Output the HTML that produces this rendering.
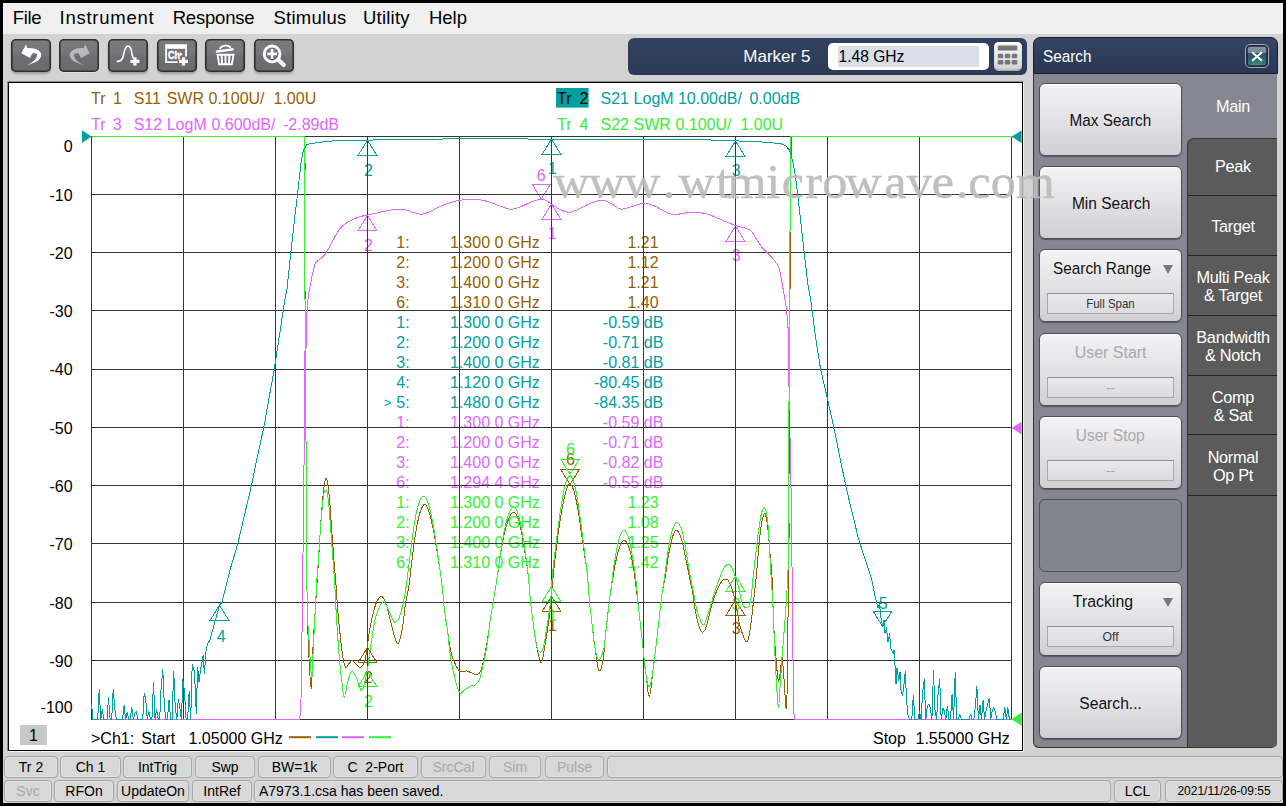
<!DOCTYPE html><html><head><meta charset="utf-8"><title>Network Analyzer</title><style>
*{box-sizing:border-box;margin:0;padding:0}
html,body{width:1286px;height:806px;overflow:hidden;background:#000}
body{position:relative;font-family:"Liberation Sans","DejaVu Sans",sans-serif;color:#000}
.abs{position:absolute}
#win{position:absolute;left:3px;top:3px;width:1280px;height:800px;background:#d3d3d3;overflow:hidden}
#menubar{position:absolute;left:0;top:0;width:1280px;height:31px;background:#f0f0f0}
#menubar span{position:absolute;top:4.3px;font-size:18.5px;line-height:22px;white-space:nowrap}
.tb{position:absolute;top:36.4px;width:40px;height:32.6px;border-radius:5px;border:0;outline:0;
 background:linear-gradient(#7b7b7f 0%,#76767a 45%,#6e6e72 55%,#6a6a6e 100%);box-shadow:0 2px 2px rgba(0,0,0,.25), inset 0 0 0 1.6px #2f2f31, inset 0 3px 1px -1px rgba(255,255,255,.13)}
.tb svg{position:absolute;left:0;top:0}
.tb.dis{box-shadow:0 1px 0 rgba(255,255,255,.35), inset 0 0 0 1.6px #2f2f31, inset -2px -2px 1px -1px rgba(255,255,255,.22)}
#mk{position:absolute;left:625px;top:35px;width:399px;height:37px;border-radius:6px;background:linear-gradient(#32415f,#2d3a58)}
#mk .lab{position:absolute;left:115.3px;top:8px;color:#fff;font-size:17px;line-height:22px;white-space:nowrap}
#mk .inp{position:absolute;left:200.4px;top:5px;width:161px;height:27px;border-radius:5px;background:#fff}
#mk .sel{position:absolute;left:9.6px;top:3px;width:141px;height:20.5px;background:#d9dee9;font-size:15.6px;line-height:21px;white-space:nowrap;padding-left:0.5px}
#mk .calc{position:absolute;left:365.6px;top:4.2px;width:28.4px;height:28.8px;border-radius:5px;background:linear-gradient(#f7f7f7 0%,#e6e6e8 50%,#cfcfd2 100%);box-shadow:inset 0 1.5px 1px #fff, inset 0 -1.5px 1px #a9a9ad, 0 0 1px #1c263c}
#panel{position:absolute;left:1030.4px;top:35px;width:244px;height:710px}
#ptitle{position:absolute;left:0;top:-1px;width:244.6px;height:37.2px;border-radius:7px 7px 0 0;background:linear-gradient(#364561 0%,#2f3d5b 55%,#2b3753 100%);border:1.6px solid #1b1d26;border-bottom-width:1px}
#ptitle .t{position:absolute;left:8.2px;top:7.8px;color:#fff;font-size:16.7px;line-height:22px}
.fx{display:inline-block;transform-origin:50% 50%;white-space:nowrap}
#ptitle .fx{transform-origin:0 50%}
#pclose{position:absolute;left:210.2px;top:5.6px;width:24px;height:24px;border-radius:5px;border:1px solid #a4abba;background:radial-gradient(ellipse 70% 45% at 50% 100%,#469884 0%,rgba(70,152,132,0) 100%),linear-gradient(#8794a4 0%,#7d8a9b 35%,#2c5964 37%,#2f6468 100%);box-shadow:inset 0 0 0 1.7px #1a2740}
#pclose svg{position:absolute;left:0;top:0}
#pbody{position:absolute;left:0;top:36px;width:244px;height:674px;background:#868692;border:1.5px solid #36361e;border-top:none;border-radius:0 0 6px 6px}
#tabs{position:absolute;left:152.6px;top:0px;width:90.4px;height:673px;background:#868692;border-radius:0 0 4px 0}
.tab{position:absolute;left:0;width:90.4px;border-top:1.5px solid #222220;border-left:1.4px solid #35351c;background:#5b5b5b}
.tab.first{border-radius:7px 0 0 0;border-top-color:#3a3a24;border-left-color:#3a3a24}
.tab.act{background:#868692;border:none;border-radius:0}
.tabt{position:absolute;left:1px;width:90px;height:58px;color:#fff;font-size:16.3px;line-height:18px;text-align:center;letter-spacing:-0.3px;display:flex;align-items:center;justify-content:center}
.pb{position:absolute;left:4.6px;width:143.4px;height:73.2px;border-radius:6px;border:1px solid #4e4e56;
 background:linear-gradient(#f3f3f5 0%,#e6e6e9 40%,#d9d9dd 75%,#cfcfd4 100%);box-shadow:inset 0 1px 0 #fff, 0 1px 1px rgba(0,0,0,.35);
 font-size:16.3px;text-align:center;color:#111}
.pb .c{position:absolute;left:0;width:100%;top:25px;line-height:22px}
.pb .u{position:absolute;left:0;width:125px;top:7px;line-height:22px}
.pb .v{position:absolute;left:7px;top:43px;width:127px;height:21px;border:1px solid #a8a8b0;border-top-color:#8e8e96;background:linear-gradient(#e9e9ec,#dcdce0);font-size:13px;line-height:19px;color:#333}
.pb .ar{position:absolute;left:123px;top:15px;width:0;height:0;border-left:5px solid transparent;border-right:5px solid transparent;border-top:9px solid #77777f}
.pb.dis{color:#a9a9ae}
.pb.dis .v{color:#a0a0a6}
.pb.empty{background:#84848f;box-shadow:none;border-color:#50505a}
.sb{position:absolute;height:22px;border:1px solid #a4a4a4;border-radius:4px;background:#d8d8d8;font-size:14px;line-height:20px;text-align:center;white-space:nowrap;color:#000;box-shadow:inset 0 0 0 1px #e2e2e2}
.sb.dis{color:#a8a8a8}
.sb.l{text-align:left;padding-left:4px}
#wm{position:absolute;left:552px;top:150px;font-family:"Liberation Serif","DejaVu Serif",serif;font-size:45px;line-height:56px;color:rgba(150,150,150,.72);white-space:nowrap;letter-spacing:3.7px;pointer-events:none}
</style></head><body><div id="win"><div id="menubar"><span style="left:9.8px;letter-spacing:-0.37px">File</span><span style="left:56.6px;letter-spacing:0.73px">Instrument</span><span style="left:169.7px;letter-spacing:-0.2px">Response</span><span style="left:270.4px;letter-spacing:0.28px">Stimulus</span><span style="left:360px;letter-spacing:0.22px">Utility</span><span style="left:425.9px;letter-spacing:0.0px">Help</span></div><div class="tb" style="left:7.6px"><svg width="40" height="32" viewBox="0 0 40 32"><path d="M10.4 14.2 L14.9 5.6 L16.4 9 C20 8.6 24.5 9.3 27.2 11.2 C29.5 12.8 30.5 14.5 30.2 16.5 C29.8 19.5 27.5 21.5 25 22.8 C22 24.4 18.5 25.6 15.7 26.1 C18.5 25 20.5 23.8 22 22.4 C24 20.7 25.8 18.5 26.1 16.4 C26.2 15 25.5 14.6 24.6 14.6 C23.4 14.3 22.3 14.2 21.3 14.2 L19 19 Z" fill="#fff"/></svg></div><div class="tb dis" style="left:56.3px"><svg width="40" height="32" viewBox="0 0 40 32"><g transform="translate(41,0) scale(-1,1)"><path d="M10.4 14.2 L14.9 5.6 L16.4 9 C20 8.6 24.5 9.3 27.2 11.2 C29.5 12.8 30.5 14.5 30.2 16.5 C29.8 19.5 27.5 21.5 25 22.8 C22 24.4 18.5 25.6 15.7 26.1 C18.5 25 20.5 23.8 22 22.4 C24 20.7 25.8 18.5 26.1 16.4 C26.2 15 25.5 14.6 24.6 14.6 C23.4 14.3 22.3 14.2 21.3 14.2 L19 19 Z" fill="#b9b9bb"/></g></svg></div><div class="tb" style="left:104.9px"><svg width="40" height="32" viewBox="0 0 40 32"><path d="M9.3 22.4 C12.8 22.4 14.3 21 15.1 17.5 C16.1 13 16.8 7 20.1 7 C23.3 7 23.5 12.5 24.1 15.5 L25 18.6" fill="none" stroke="#fff" stroke-width="1.6" stroke-linecap="round"/><path d="M22.4 22.4h9M26.9 18.2v8.4" stroke="#fff" stroke-width="3.3" fill="none"/></svg></div><div class="tb" style="left:153.8px"><svg width="40" height="32" viewBox="0 0 40 32"><path d="M8.2 5.2h21.7v4.6h-21.7z" fill="#fff"/><path d="M9.1 9v14.1h11.5M29 9v8.5" fill="none" stroke="#fff" stroke-width="1.8"/><text transform="translate(11.1,19.9) scale(0.8,1)" font-size="11" font-weight="bold" fill="#fff" stroke="#fff" stroke-width="0.55" font-family="Liberation Sans, sans-serif">Ch</text><path d="M22.6 12.8l3 2.4l-3 2.4z" fill="#fff"/><path d="M22 22.4h9M26.5 18.2v8.4" stroke="#fff" stroke-width="3.3" fill="none"/></svg></div><div class="tb" style="left:202.4px"><svg width="40" height="32" viewBox="0 0 40 32"><path d="M10.9 12.6L28.6 10.3" stroke="#fff" stroke-width="2.4" fill="none"/><path d="M14.8 10.2C16.2 6 24 5.4 25.6 8.8" fill="none" stroke="#fff" stroke-width="1.9"/><path d="M12.5 15.8h16l-1.7 9.4h-12.6z" fill="none" stroke="#fff" stroke-width="1.9"/><path d="M16.6 16l.5 9M20.5 16v9M24.4 16l-.5 9" stroke="#fff" stroke-width="2"/></svg></div><div class="tb" style="left:251.4px"><svg width="40" height="32" viewBox="0 0 40 32"><circle cx="18.1" cy="14.9" r="7.9" fill="none" stroke="#fff" stroke-width="2.8"/><path d="M24.2 20.9l5.6 4.9" stroke="#fff" stroke-width="4.2" stroke-linecap="round"/><path d="M13.3 14.9h9.6M18.1 10.1v9.6" stroke="#fff" stroke-width="2.6"/></svg></div><div id="mk"><div class="lab">Marker 5</div><div class="inp"><div class="sel">1.48 GHz</div></div><div class="calc"><svg width="27" height="27" viewBox="0 0 27 27" style="position:absolute;left:0;top:0"><g fill="#777779"><rect x="3.8" y="3.6" width="19.5" height="4.8" rx="1"/><rect x="3.8" y="11.8" width="5.5" height="4.5" rx="1.2"/><rect x="10.8" y="11.8" width="5.5" height="4.5" rx="1.2"/><rect x="17.8" y="11.8" width="5.5" height="4.5" rx="1.2"/><rect x="3.8" y="17.9" width="5.5" height="4.5" rx="1.2"/><rect x="10.8" y="17.9" width="5.5" height="4.5" rx="1.2"/><rect x="17.8" y="17.9" width="5.5" height="4.5" rx="1.2"/></g></svg></div></div><div id="panel"><div id="ptitle"><div class="t"><span class="fx" style="transform:scaleX(0.917)">Search</span></div><div id="pclose"><svg width="22" height="22" viewBox="0 0 22 22"><path d="M6.2 7.2l9.8 8.6M16 7.2l-9.8 8.6" stroke="#fff" stroke-width="2"/></svg></div></div><div id="pbody"><div class="pb" style="top:8.7px"><div class="c"><span class="fx" style="transform:scaleX(0.94)">Max Search</span></div></div><div class="pb" style="top:92.0px"><div class="c"><span class="fx" style="transform:scaleX(0.953)">Min Search</span></div></div><div class="pb" style="top:175.3px"><div class="u"><span class="fx" style="transform:scaleX(0.94)">Search Range</span></div><div class="ar"></div><div class="v"><span class="fx" style="transform:scaleX(0.882)">Full Span</span></div></div><div class="pb dis" style="top:258.6px"><div class="c" style="top:7px"><span class="fx" style="transform:scaleX(0.978)">User Start</span></div><div class="v">--</div></div><div class="pb dis" style="top:341.9px"><div class="c" style="top:7px"><span class="fx" style="transform:scaleX(0.954)">User Stop</span></div><div class="v">--</div></div><div class="pb empty" style="top:425.2px"></div><div class="pb" style="top:508.4px"><div class="u"><span class="fx" style="transform:scaleX(0.974)">Tracking</span></div><div class="ar"></div><div class="v"><span class="fx" style="transform:scaleX(0.943)">Off</span></div></div><div class="pb" style="top:591.7px"><div class="c"><span class="fx" style="transform:scaleX(0.96)">Search...</span></div></div><div id="tabs"><div class="tab act" style="top:2.0px;height:61.5px"></div><div class="tabt" style="top:2.5px"><div>Main</div></div><div class="tab first" style="top:63.5px;height:57.5px"></div><div class="tabt" style="top:62.5px"><div>Peak</div></div><div class="tab" style="top:121.0px;height:60.0px"></div><div class="tabt" style="top:122.5px"><div>Target</div></div><div class="tab" style="top:181.0px;height:60.0px"></div><div class="tabt" style="top:182.5px"><div>Multi Peak<br>&amp; Target</div></div><div class="tab" style="top:241.0px;height:59.7px"></div><div class="tabt" style="top:242.5px"><div>Bandwidth<br>&amp; Notch</div></div><div class="tab" style="top:300.7px;height:59.7px"></div><div class="tabt" style="top:302.5px"><div>Comp<br>&amp; Sat</div></div><div class="tab" style="top:360.4px;height:60.3px"></div><div class="tabt" style="top:362.5px"><div>Normal<br>Op Pt</div></div><div class="tab" style="top:420.7px;height:252.3px;border-radius:0 0 4px 0"></div></div></div></div><div class="sb " style="left:1px;top:753px;width:54px;">Tr 2</div><div class="sb " style="left:57px;top:753px;width:61px;">Ch 1</div><div class="sb " style="left:120px;top:753px;width:69px;">IntTrig</div><div class="sb " style="left:192px;top:753px;width:60px;">Swp</div><div class="sb " style="left:255px;top:753px;width:73px;">BW=1k</div><div class="sb " style="left:330px;top:753px;width:85px;">C&nbsp; 2-Port</div><div class="sb dis" style="left:418px;top:753px;width:65px;">SrcCal</div><div class="sb dis" style="left:486px;top:753px;width:52px;">Sim</div><div class="sb dis" style="left:542px;top:753px;width:59px;">Pulse</div><div class="sb " style="left:604px;top:753px;width:676px;"></div><div class="sb dis" style="left:1px;top:777px;width:48px;">Svc</div><div class="sb " style="left:51px;top:777px;width:60px;">RFOn</div><div class="sb " style="left:114px;top:777px;width:72px;">UpdateOn</div><div class="sb " style="left:189px;top:777px;width:60px;">IntRef</div><div class="sb l" style="left:251px;top:777px;width:857px;">A7973.1.csa has been saved.</div><div class="sb " style="left:1111px;top:777px;width:47px;">LCL</div><div class="sb " style="left:1162px;top:777px;width:118px;font-size:12px;">2021/11/26-09:55</div><div class="abs" style="left:4px;top:78px;width:1017px;height:671px;border:1px solid;border-color:#8f8f8f #f2f2f2 #f2f2f2 #8f8f8f"><div style="width:100%;height:100%;border:1px solid #000;background:#fff"></div></div></div><svg class="abs" style="left:0;top:0" width="1286" height="806" viewBox="0 0 1286 806" font-family="Liberation Sans, DejaVu Sans, sans-serif"><defs><clipPath id="cp"><rect x="90" y="135.5" width="923" height="584.6"/></clipPath></defs><path d="M367.5 647.5L358.2 662.5H376.8Z" fill="none" stroke="#965f00" stroke-width="1" shape-rendering="crispEdges"/><text x="368.4" y="683.0" fill="#965f00" font-size="16" text-anchor="middle" >2</text><path d="M551.5 596.4L542.2 611.4H560.8Z" fill="none" stroke="#965f00" stroke-width="1" shape-rendering="crispEdges"/><text x="552.5" y="630.5" fill="#965f00" font-size="16" text-anchor="middle" >1</text><path d="M735.5 600.0L726.2 615.0H744.8Z" fill="none" stroke="#965f00" stroke-width="1" shape-rendering="crispEdges"/><text x="736.3" y="634.0" fill="#965f00" font-size="16" text-anchor="middle" >3</text><path d="M570.0 484.5L560.7 469.5H579.3Z" fill="none" stroke="#965f00" stroke-width="1" shape-rendering="crispEdges"/><text x="570.5" y="464.7" fill="#965f00" font-size="16" text-anchor="middle" >6</text><path d="M367.5 215.5L358.2 230.5H376.8Z" fill="none" stroke="#e066ff" stroke-width="1" shape-rendering="crispEdges"/><text x="368.4" y="251.0" fill="#e066ff" font-size="16" text-anchor="middle" >2</text><path d="M551.5 204.1L542.2 219.1H560.8Z" fill="none" stroke="#e066ff" stroke-width="1" shape-rendering="crispEdges"/><text x="552.5" y="238.5" fill="#e066ff" font-size="16" text-anchor="middle" >1</text><path d="M735.5 226.0L726.2 241.0H744.8Z" fill="none" stroke="#e066ff" stroke-width="1" shape-rendering="crispEdges"/><text x="736.3" y="260.7" fill="#e066ff" font-size="16" text-anchor="middle" >3</text><path d="M541.3 199.0L532.0 184.0H550.6Z" fill="none" stroke="#e066ff" stroke-width="1" shape-rendering="crispEdges"/><text x="541.3" y="180.5" fill="#e066ff" font-size="16" text-anchor="middle" >6</text><path d="M367.5 671.5L358.2 686.5H376.8Z" fill="none" stroke="#33f033" stroke-width="1" shape-rendering="crispEdges"/><text x="368.4" y="706.5" fill="#33f033" font-size="16" text-anchor="middle" >2</text><path d="M551.5 586.5L542.2 601.5H560.8Z" fill="none" stroke="#33f033" stroke-width="1" shape-rendering="crispEdges"/><text x="552.5" y="621.0" fill="#33f033" font-size="16" text-anchor="middle" >1</text><path d="M735.5 576.0L726.2 591.0H744.8Z" fill="none" stroke="#33f033" stroke-width="1" shape-rendering="crispEdges"/><text x="736.3" y="609.5" fill="#33f033" font-size="16" text-anchor="middle" >3</text><path d="M570.0 474.2L560.7 459.2H579.3Z" fill="none" stroke="#33f033" stroke-width="1" shape-rendering="crispEdges"/><text x="570.5" y="455.2" fill="#33f033" font-size="16" text-anchor="middle" >6</text><path d="M367.5 140.3L358.2 155.3H376.8Z" fill="none" stroke="#00a0a0" stroke-width="1" shape-rendering="crispEdges"/><text x="368.4" y="176.3" fill="#00a0a0" font-size="16" text-anchor="middle" >2</text><path d="M551.5 139.2L542.2 154.2H560.8Z" fill="none" stroke="#00a0a0" stroke-width="1" shape-rendering="crispEdges"/><text x="552.5" y="174.0" fill="#00a0a0" font-size="16" text-anchor="middle" >1</text><path d="M735.5 141.0L726.2 156.0H744.8Z" fill="none" stroke="#00a0a0" stroke-width="1" shape-rendering="crispEdges"/><text x="736.3" y="175.6" fill="#00a0a0" font-size="16" text-anchor="middle" >3</text><path d="M219.5 605.2L210.2 620.2H228.8Z" fill="none" stroke="#00a0a0" stroke-width="1" shape-rendering="crispEdges"/><text x="221.2" y="641.5" fill="#00a0a0" font-size="16" text-anchor="middle" >4</text><path d="M882.5 626.3L873.2 611.3H891.8Z" fill="none" stroke="#00a0a0" stroke-width="1" shape-rendering="crispEdges"/><text x="883.3" y="608.5" fill="#00a0a0" font-size="16" text-anchor="middle" >5</text><text x="396.3" y="247.7" fill="#965f00" font-size="16" text-anchor="start" >1:</text><text x="450.0" y="247.7" fill="#965f00" font-size="16" text-anchor="start" >1.300 0 GHz</text><text x="658.6" y="247.7" fill="#965f00" font-size="16" text-anchor="end" >1.21</text><text x="396.3" y="267.7" fill="#965f00" font-size="16" text-anchor="start" >2:</text><text x="450.0" y="267.7" fill="#965f00" font-size="16" text-anchor="start" >1.200 0 GHz</text><text x="658.6" y="267.7" fill="#965f00" font-size="16" text-anchor="end" >1.12</text><text x="396.3" y="287.7" fill="#965f00" font-size="16" text-anchor="start" >3:</text><text x="450.0" y="287.7" fill="#965f00" font-size="16" text-anchor="start" >1.400 0 GHz</text><text x="658.6" y="287.7" fill="#965f00" font-size="16" text-anchor="end" >1.21</text><text x="396.3" y="307.7" fill="#965f00" font-size="16" text-anchor="start" >6:</text><text x="450.0" y="307.7" fill="#965f00" font-size="16" text-anchor="start" >1.310 0 GHz</text><text x="658.6" y="307.7" fill="#965f00" font-size="16" text-anchor="end" >1.40</text><text x="396.3" y="327.7" fill="#00a0a0" font-size="16" text-anchor="start" >1:</text><text x="450.0" y="327.7" fill="#00a0a0" font-size="16" text-anchor="start" >1.300 0 GHz</text><text x="663.3" y="327.7" fill="#00a0a0" font-size="16" text-anchor="end" >-0.59 dB</text><text x="396.3" y="347.7" fill="#00a0a0" font-size="16" text-anchor="start" >2:</text><text x="450.0" y="347.7" fill="#00a0a0" font-size="16" text-anchor="start" >1.200 0 GHz</text><text x="663.3" y="347.7" fill="#00a0a0" font-size="16" text-anchor="end" >-0.71 dB</text><text x="396.3" y="367.7" fill="#00a0a0" font-size="16" text-anchor="start" >3:</text><text x="450.0" y="367.7" fill="#00a0a0" font-size="16" text-anchor="start" >1.400 0 GHz</text><text x="663.3" y="367.7" fill="#00a0a0" font-size="16" text-anchor="end" >-0.81 dB</text><text x="396.3" y="387.7" fill="#00a0a0" font-size="16" text-anchor="start" >4:</text><text x="450.0" y="387.7" fill="#00a0a0" font-size="16" text-anchor="start" >1.120 0 GHz</text><text x="663.3" y="387.7" fill="#00a0a0" font-size="16" text-anchor="end" >-80.45 dB</text><text x="396.3" y="407.7" fill="#00a0a0" font-size="16" text-anchor="start" >5:</text><text x="450.0" y="407.7" fill="#00a0a0" font-size="16" text-anchor="start" >1.480 0 GHz</text><text x="663.3" y="407.7" fill="#00a0a0" font-size="16" text-anchor="end" >-84.35 dB</text><text x="383.8" y="407.2" fill="#00a0a0" font-size="13" text-anchor="start" >&gt;</text><text x="396.3" y="427.7" fill="#e066ff" font-size="16" text-anchor="start" >1:</text><text x="450.0" y="427.7" fill="#e066ff" font-size="16" text-anchor="start" >1.300 0 GHz</text><text x="663.3" y="427.7" fill="#e066ff" font-size="16" text-anchor="end" >-0.59 dB</text><text x="396.3" y="447.7" fill="#e066ff" font-size="16" text-anchor="start" >2:</text><text x="450.0" y="447.7" fill="#e066ff" font-size="16" text-anchor="start" >1.200 0 GHz</text><text x="663.3" y="447.7" fill="#e066ff" font-size="16" text-anchor="end" >-0.71 dB</text><text x="396.3" y="467.7" fill="#e066ff" font-size="16" text-anchor="start" >3:</text><text x="450.0" y="467.7" fill="#e066ff" font-size="16" text-anchor="start" >1.400 0 GHz</text><text x="663.3" y="467.7" fill="#e066ff" font-size="16" text-anchor="end" >-0.82 dB</text><text x="396.3" y="487.7" fill="#e066ff" font-size="16" text-anchor="start" >6:</text><text x="450.0" y="487.7" fill="#e066ff" font-size="16" text-anchor="start" >1.294 4 GHz</text><text x="663.3" y="487.7" fill="#e066ff" font-size="16" text-anchor="end" >-0.55 dB</text><text x="396.3" y="507.7" fill="#33f033" font-size="16" text-anchor="start" >1:</text><text x="450.0" y="507.7" fill="#33f033" font-size="16" text-anchor="start" >1.300 0 GHz</text><text x="658.6" y="507.7" fill="#33f033" font-size="16" text-anchor="end" >1.23</text><text x="396.3" y="527.7" fill="#33f033" font-size="16" text-anchor="start" >2:</text><text x="450.0" y="527.7" fill="#33f033" font-size="16" text-anchor="start" >1.200 0 GHz</text><text x="658.6" y="527.7" fill="#33f033" font-size="16" text-anchor="end" >1.08</text><text x="396.3" y="547.7" fill="#33f033" font-size="16" text-anchor="start" >3:</text><text x="450.0" y="547.7" fill="#33f033" font-size="16" text-anchor="start" >1.400 0 GHz</text><text x="658.6" y="547.7" fill="#33f033" font-size="16" text-anchor="end" >1.25</text><text x="396.3" y="567.7" fill="#33f033" font-size="16" text-anchor="start" >6:</text><text x="450.0" y="567.7" fill="#33f033" font-size="16" text-anchor="start" >1.310 0 GHz</text><text x="658.6" y="567.7" fill="#33f033" font-size="16" text-anchor="end" >1.42</text><text x="91.0" y="103.7" fill="#965f00" font-size="16" text-anchor="start" >Tr</text><text x="113.0" y="103.7" fill="#965f00" font-size="16" text-anchor="start" >1</text><text x="133.7" y="103.7" fill="#965f00" font-size="16" text-anchor="start" >S11</text><text x="166.7" y="103.7" fill="#965f00" font-size="16" text-anchor="start" >SWR</text><text x="208.5" y="103.7" fill="#965f00" font-size="16" text-anchor="start" >0.100U/</text><text x="273.5" y="103.7" fill="#965f00" font-size="16" text-anchor="start" >1.00U</text><text x="91.0" y="130.3" fill="#e066ff" font-size="16" text-anchor="start" >Tr</text><text x="112.8" y="130.3" fill="#e066ff" font-size="16" text-anchor="start" >3</text><text x="133.7" y="130.3" fill="#e066ff" font-size="16" text-anchor="start" >S12</text><text x="166.7" y="130.3" fill="#e066ff" font-size="16" text-anchor="start" >LogM</text><text x="211.4" y="130.3" fill="#e066ff" font-size="16" text-anchor="start" >0.600dB/</text><text x="283.0" y="130.3" fill="#e066ff" font-size="16" text-anchor="start" >-2.89dB</text><rect x="556" y="88" width="32.6" height="19.6" fill="#00a0a0"/><text x="557.0" y="103.7" fill="#000" font-size="16" text-anchor="start" >Tr</text><text x="579.4" y="103.7" fill="#000" font-size="16" text-anchor="start" >2</text><text x="600.5" y="103.7" fill="#00a0a0" font-size="16" text-anchor="start" >S21</text><text x="633.6" y="103.7" fill="#00a0a0" font-size="16" text-anchor="start" >LogM</text><text x="677.9" y="103.7" fill="#00a0a0" font-size="16" text-anchor="start" >10.00dB/</text><text x="749.4" y="103.7" fill="#00a0a0" font-size="16" text-anchor="start" >0.00dB</text><text x="557.0" y="130.3" fill="#33f033" font-size="16" text-anchor="start" >Tr</text><text x="579.4" y="130.3" fill="#33f033" font-size="16" text-anchor="start" >4</text><text x="600.5" y="130.3" fill="#33f033" font-size="16" text-anchor="start" >S22</text><text x="633.6" y="130.3" fill="#33f033" font-size="16" text-anchor="start" >SWR</text><text x="675.4" y="130.3" fill="#33f033" font-size="16" text-anchor="start" >0.100U/</text><text x="740.4" y="130.3" fill="#33f033" font-size="16" text-anchor="start" >1.00U</text><text x="72.6" y="151.6" fill="#000" font-size="16" text-anchor="end" >0</text><text x="72.6" y="200.5" fill="#000" font-size="16" text-anchor="end" >-10</text><text x="72.6" y="258.8" fill="#000" font-size="16" text-anchor="end" >-20</text><text x="72.6" y="317.1" fill="#000" font-size="16" text-anchor="end" >-30</text><text x="72.6" y="375.4" fill="#000" font-size="16" text-anchor="end" >-40</text><text x="72.6" y="433.7" fill="#000" font-size="16" text-anchor="end" >-50</text><text x="72.6" y="492.0" fill="#000" font-size="16" text-anchor="end" >-60</text><text x="72.6" y="550.3" fill="#000" font-size="16" text-anchor="end" >-70</text><text x="72.6" y="608.6" fill="#000" font-size="16" text-anchor="end" >-80</text><text x="72.6" y="666.9" fill="#000" font-size="16" text-anchor="end" >-90</text><text x="72.6" y="712.6" fill="#000" font-size="16" text-anchor="end" >-100</text><rect x="20" y="725" width="27" height="20" fill="#c8c8c8"/><text x="33.5" y="741.0" fill="#000" font-size="16" text-anchor="middle" >1</text><text x="91.0" y="743.8" fill="#000" font-size="16" text-anchor="start" >&gt;Ch1:</text><text x="141.3" y="743.8" fill="#000" font-size="16" text-anchor="start" >Start</text><text x="188.5" y="743.8" fill="#000" font-size="16" text-anchor="start" >1.05000 GHz</text><text x="873.0" y="743.8" fill="#000" font-size="16" text-anchor="start" >Stop</text><text x="915.5" y="743.8" fill="#000" font-size="16" text-anchor="start" >1.55000 GHz</text><rect x="289" y="736.2" width="22" height="2" fill="#965f00"/><rect x="316" y="736.2" width="22" height="2" fill="#00a0a0"/><rect x="342" y="736.2" width="22" height="2" fill="#e066ff"/><rect x="369" y="736.2" width="22" height="2" fill="#33f033"/><path d="M82 130.3V143L91.6 136.6Z" fill="#00a0a0"/><path d="M1021.6 130.4V143L1011.6 136.6Z" fill="#00a0a0"/><path d="M1021.6 421.8V434.4L1011.6 428.1Z" fill="#e066ff"/><path d="M1021.8 712.7V725.7L1011.3 719.2Z" fill="#33f033"/><path d="M91.5 136.0V720.0M183.5 136.0V720.0M275.5 136.0V720.0M367.5 136.0V720.0M459.5 136.0V720.0M551.5 136.0V720.0M643.5 136.0V720.0M735.5 136.0V720.0M827.5 136.0V720.0M919.5 136.0V720.0M1011.5 136.0V720.0M91.0 136.5H1012.0M91.0 194.5H1012.0M91.0 252.5H1012.0M91.0 310.5H1012.0M91.0 369.5H1012.0M91.0 427.5H1012.0M91.0 485.5H1012.0M91.0 543.5H1012.0M91.0 602.5H1012.0M91.0 660.5H1012.0M91.0 719.5H1012.0" stroke="#363636" stroke-width="1" fill="none" shape-rendering="crispEdges"/><g clip-path="url(#cp)" shape-rendering="crispEdges"><path d="M91.5 136.5L304.5 136.5L304.5 299.0L305.5 301.0L305.5 440.0L306.5 442.0L306.5 590.0L307.5 592.0L307.5 623.0L308.8 654.5C309.2 660.9 310.5 689.2 311.2 689.2C311.9 689.2 311.9 668.8 312.6 654.5C313.3 640.2 314.4 623.7 315.2 611.0C316.0 598.3 316.2 595.3 316.9 585.0C317.6 574.7 318.1 566.4 318.8 555.0C319.5 543.6 320.1 533.5 320.8 523.0C321.5 512.5 322.1 505.1 322.8 498.0C323.5 490.9 323.9 487.6 324.5 484.0C325.1 480.4 325.5 478.2 326.1 478.2C326.7 478.2 327.2 480.0 327.8 484.0C328.4 488.0 328.9 491.9 329.6 500.0C330.3 508.1 330.8 517.4 331.6 528.0C332.4 538.6 333.0 547.5 333.8 558.0C334.6 568.5 335.3 575.3 336.0 585.0C336.7 594.7 337.0 601.5 337.8 611.0C338.6 620.5 339.4 628.4 340.4 637.0C341.4 645.6 342.0 652.4 343.0 658.0C344.0 663.6 344.5 666.5 345.6 667.5C346.7 668.5 347.7 664.8 349.0 663.5C350.3 662.2 351.1 660.4 352.5 660.6C353.9 660.8 355.1 663.2 356.5 664.5C357.9 665.8 358.8 668.1 360.3 667.5C361.8 666.9 363.4 665.7 364.7 661.4C366.0 657.1 366.6 650.0 367.6 644.0C368.6 638.0 368.7 634.8 369.9 628.4C371.1 622.0 372.9 614.2 374.2 609.3C375.5 604.4 375.6 603.9 376.9 601.5C378.2 599.1 379.6 596.1 381.2 596.3C382.8 596.5 383.8 597.8 385.5 602.4C387.2 607.0 388.6 614.0 390.7 621.5C392.8 629.0 395.1 641.6 397.2 643.2C399.3 644.8 400.5 637.2 402.0 630.0C403.5 622.8 404.2 612.2 405.5 604.0C406.8 595.8 407.8 593.1 409.0 585.0C410.2 576.9 410.8 569.4 412.0 560.0C413.2 550.6 414.2 542.1 415.5 534.0C416.8 525.9 417.8 520.9 419.0 516.0C420.2 511.1 421.0 509.6 422.0 507.5C423.0 505.4 423.6 504.3 424.6 504.3C425.6 504.3 426.4 505.2 427.5 507.5C428.6 509.8 429.3 512.3 430.5 517.0C431.7 521.7 432.6 525.7 434.0 533.0C435.4 540.3 436.5 547.5 438.0 557.0C439.5 566.5 440.8 575.1 442.0 585.0C443.2 594.9 443.6 603.0 444.6 611.0C445.6 619.0 446.1 621.1 447.2 628.4C448.3 635.7 449.4 645.0 450.7 651.0C452.0 657.0 452.7 657.9 454.1 661.4C455.5 664.9 457.1 668.1 458.5 670.0C459.9 671.9 460.5 671.7 462.0 671.9C463.5 672.1 464.9 670.7 466.8 671.0C468.7 671.3 470.4 672.6 472.3 673.3C474.2 674.0 475.5 675.0 477.0 674.6C478.5 674.2 479.5 673.6 480.7 671.0C481.9 668.4 482.3 665.9 483.5 660.6C484.7 655.3 486.0 649.2 487.2 642.0C488.4 634.8 488.9 628.7 490.0 621.5C491.1 614.3 491.8 611.0 493.2 602.5C494.6 594.0 496.1 584.4 497.5 575.0C498.9 565.6 499.7 558.7 501.0 551.0C502.3 543.3 503.2 538.6 504.5 533.0C505.8 527.4 506.8 524.0 508.0 520.5C509.2 517.0 510.0 515.6 511.0 514.0C512.0 512.4 512.5 512.0 513.4 512.0C514.3 512.0 515.0 512.4 516.0 514.0C517.0 515.6 517.9 517.1 519.0 521.0C520.1 524.9 520.9 529.1 522.0 535.0C523.1 540.9 523.9 545.7 525.0 553.0C526.1 560.3 527.2 565.9 528.2 575.0C529.2 584.1 529.6 593.0 530.6 602.5C531.6 612.0 532.7 619.1 533.8 627.0C534.9 634.9 535.2 639.1 536.6 645.7C538.0 652.3 539.7 662.9 541.2 662.9C542.7 662.9 543.5 653.3 544.9 645.7C546.3 638.1 547.5 631.1 548.7 621.5C549.9 611.9 550.7 602.1 551.5 593.6C552.3 585.1 552.5 582.8 553.3 575.0C554.1 567.2 555.0 559.6 556.0 551.0C557.0 542.4 557.9 535.7 559.0 528.0C560.1 520.3 560.9 515.0 562.0 509.0C563.1 502.9 564.0 499.0 565.0 495.0C566.0 491.0 566.6 489.0 567.5 487.0C568.4 485.0 569.0 484.3 569.9 484.3C570.8 484.3 571.5 484.7 572.5 487.0C573.5 489.3 574.4 492.2 575.5 497.0C576.6 501.8 577.4 506.2 578.5 513.0C579.6 519.8 580.3 525.8 581.5 534.0C582.7 542.2 583.9 550.5 585.0 558.0C586.1 565.5 586.6 566.8 587.4 575.0C588.2 583.2 588.7 593.0 589.6 602.5C590.5 612.0 591.4 618.4 592.4 627.0C593.4 635.6 594.0 641.5 595.2 649.5C596.4 657.5 597.5 668.5 598.9 670.5C600.3 672.5 601.8 666.9 603.0 660.6C604.2 654.3 604.3 647.1 605.4 636.4C606.5 625.7 608.0 611.9 609.2 602.5C610.4 593.1 610.7 591.3 611.7 585.0C612.7 578.7 613.4 573.7 614.5 568.0C615.6 562.3 616.4 558.2 617.5 554.0C618.6 549.8 619.3 547.5 620.5 545.0C621.7 542.5 622.8 540.4 624.2 540.4C625.6 540.4 626.8 542.3 628.0 545.0C629.2 547.7 630.0 550.8 631.0 555.0C632.0 559.2 632.7 563.4 633.5 568.0C634.3 572.6 634.4 573.7 635.2 580.0C636.0 586.3 636.9 593.9 637.9 602.5C638.9 611.1 639.7 617.7 640.7 627.0C641.7 636.3 642.5 643.8 643.5 653.0C644.5 662.2 645.2 669.4 646.3 677.3C647.4 685.2 648.2 697.3 649.4 696.3C650.6 695.3 651.7 680.4 652.8 671.8C653.9 663.2 654.5 658.6 655.6 649.4C656.7 640.2 657.6 631.7 658.8 621.5C660.0 611.3 660.9 602.1 662.1 593.6C663.3 585.1 664.5 581.5 665.6 575.0C666.7 568.5 667.0 563.9 668.0 558.0C669.0 552.1 670.0 547.4 671.0 543.0C672.0 538.6 672.6 536.4 673.5 534.0C674.4 531.6 674.9 530.0 676.0 530.0C677.1 530.0 678.3 531.6 679.5 534.0C680.7 536.4 681.4 538.8 682.5 543.0C683.6 547.2 684.3 551.1 685.5 557.0C686.7 562.9 687.8 568.3 689.1 575.0C690.4 581.7 691.6 586.8 692.8 593.6C694.0 600.4 694.4 606.1 695.6 612.2C696.8 618.3 697.9 623.3 699.3 627.0C700.7 630.7 701.6 632.7 703.0 632.3C704.4 631.9 705.1 630.4 706.8 625.0C708.5 619.6 709.9 610.5 712.3 603.0C714.7 595.5 717.2 588.7 719.8 584.3C722.4 579.9 724.2 578.7 726.3 579.0C728.4 579.3 729.3 581.6 731.0 586.0C732.7 590.4 733.9 595.5 735.6 603.0C737.3 610.5 738.2 619.9 740.3 627.0C742.4 634.1 744.9 642.0 746.8 642.0C748.7 642.0 749.3 634.1 750.5 627.0C751.7 619.9 752.3 611.6 753.3 603.0C754.3 594.4 755.0 588.6 755.9 580.0C756.8 571.4 757.2 564.2 758.0 556.0C758.8 547.8 759.3 541.4 760.0 535.0C760.7 528.6 761.2 524.9 762.0 521.0C762.8 517.1 763.8 513.9 764.6 513.5C765.4 513.1 765.8 515.1 766.5 519.0C767.2 522.9 767.8 528.2 768.5 535.0C769.2 541.8 769.6 548.7 770.2 556.0C770.8 563.3 771.2 562.0 771.9 575.0C772.6 588.0 773.0 610.6 773.8 627.0C774.6 643.4 775.7 654.4 776.5 664.3C777.3 674.2 777.7 679.6 778.4 681.0C779.1 682.4 779.6 676.1 780.3 671.8C781.0 667.5 781.4 656.4 782.1 657.8C782.8 659.2 783.2 670.0 784.0 679.2C784.8 688.4 785.7 711.8 786.4 708.0C787.1 704.2 787.5 667.7 787.7 658.7L788.2 593.6L788.5 560.0L788.5 402.0L789.5 400.0L789.5 232.0L790.5 230.0L790.5 136.5L1011.5 136.5" fill="none" stroke="#965f00" stroke-width="1" stroke-linejoin="round"/><path d="M91.5 719.5L299.8 719.5L301.5 690.0L302.3 600.0L303.5 520.0L303.5 470.0L304.5 460.0L304.5 352.0L306.5 347.0C306.6 341.6 306.6 328.5 306.8 320.0C307.0 311.5 307.0 309.7 307.4 304.6C307.8 299.5 308.0 298.7 308.6 294.7C309.2 290.7 309.9 288.3 310.5 284.8C311.1 281.3 311.1 280.3 311.7 277.3C312.3 274.3 312.8 272.8 313.6 269.9C314.4 267.0 313.7 265.6 315.5 263.0C317.3 260.4 320.5 259.2 322.7 257.0C324.9 254.8 324.6 255.2 326.6 252.0C328.6 248.8 330.0 245.7 332.6 241.1C335.2 236.5 336.5 233.0 339.5 229.2C342.5 225.4 343.4 224.8 347.5 222.3C351.6 219.8 355.5 218.2 360.0 216.7C364.5 215.2 365.8 215.5 369.8 214.6C373.8 213.7 375.4 213.3 380.0 212.3C384.6 211.3 388.7 210.4 392.7 209.8C396.7 209.2 396.9 209.1 400.0 209.2C403.1 209.3 403.9 209.5 408.0 210.5C412.1 211.5 416.0 214.1 420.4 214.3C424.8 214.5 425.8 213.2 430.0 211.5C434.2 209.8 437.2 207.7 441.6 205.8C446.0 203.9 447.4 203.2 452.0 202.0C456.6 200.8 460.3 200.2 464.5 199.6C468.7 199.0 469.5 199.0 473.0 199.1C476.5 199.2 478.5 199.5 482.0 200.2C485.5 200.9 486.6 201.2 490.6 202.5C494.6 203.8 497.9 205.5 502.0 206.8C506.1 208.1 507.7 209.2 511.3 209.2C514.9 209.2 516.3 208.3 520.0 207.0C523.7 205.7 525.9 204.1 530.0 202.5C534.1 200.9 537.5 199.5 540.7 199.1C543.9 198.7 543.9 199.5 546.0 200.5C548.1 201.5 548.6 202.3 551.4 204.1C554.2 205.9 556.5 207.9 560.0 209.5C563.5 211.1 565.2 212.4 569.0 212.3C572.8 212.2 575.1 210.6 579.0 209.0C582.9 207.4 584.1 205.9 588.6 204.1C593.1 202.3 597.2 200.3 601.7 200.2C606.2 200.1 607.1 201.7 611.0 203.5C614.9 205.3 617.1 208.4 621.3 209.0C625.5 209.6 627.4 207.6 632.0 206.5C636.6 205.4 639.7 203.6 644.1 203.4C648.5 203.2 650.1 204.3 653.9 205.7C657.7 207.1 659.1 208.7 663.0 210.5C666.9 212.3 668.5 214.2 673.5 214.6C678.5 215.0 682.1 212.9 688.0 212.6C693.9 212.3 698.3 212.6 702.9 213.2C707.5 213.8 707.7 214.4 711.0 215.5C714.3 216.6 714.3 216.8 719.2 218.8C724.1 220.8 729.9 223.6 735.6 225.6C741.3 227.6 744.3 227.5 747.6 228.8C750.9 230.1 750.0 229.7 751.9 231.9C753.8 234.1 754.9 236.8 757.0 240.0C759.1 243.2 760.3 245.3 762.5 248.0C764.7 250.7 765.8 251.0 768.2 253.5C770.6 256.0 772.3 257.7 774.4 260.5C776.5 263.3 777.5 264.5 778.7 267.4C779.9 270.3 779.9 271.4 780.6 274.9C781.3 278.4 781.7 280.6 782.4 284.8C783.1 289.0 783.5 291.5 784.3 296.0C785.1 300.5 785.6 302.4 786.2 307.1C786.8 311.8 787.0 313.8 787.4 319.5C787.8 325.2 788.2 326.7 788.4 335.6C788.6 344.5 788.6 358.3 788.6 364.0L789.6 420.0L790.8 472.6L791.7 538.0L792.6 620.0L793.3 690.0L794.2 719.5L1011.5 719.5" fill="none" stroke="#e066ff" stroke-width="1" stroke-linejoin="round"/><path d="M91.5 136.5L304.5 136.5L304.5 299.0L305.5 301.0L305.5 440.0L306.5 442.0L306.5 590.0L307.5 592.0L307.6 620.0L309.0 640.0C309.5 646.8 310.9 675.2 311.7 677.0C312.5 678.8 312.6 661.4 313.2 650.0C313.8 638.6 314.4 626.9 315.0 615.0C315.6 603.1 316.0 595.5 316.6 585.0C317.2 574.5 317.8 568.5 318.5 558.0C319.2 547.5 319.8 537.7 320.5 528.0C321.2 518.3 321.9 511.4 322.5 505.0C323.1 498.6 323.4 495.8 324.0 493.0C324.6 490.2 325.0 489.5 325.6 489.5C326.2 489.5 326.6 489.8 327.2 493.0C327.8 496.2 328.3 499.7 329.0 507.0C329.7 514.3 330.3 523.3 331.0 533.0C331.7 542.7 332.3 550.5 333.0 560.0C333.7 569.5 334.1 574.1 334.8 585.0C335.5 595.9 335.7 606.0 336.6 619.7C337.5 633.4 338.5 647.9 339.5 659.7C340.5 671.5 341.2 677.1 342.1 684.0C343.0 690.9 343.2 697.6 344.2 697.6C345.2 697.6 346.3 688.0 347.3 684.0C348.3 680.0 348.6 678.4 349.5 676.0C350.4 673.6 350.8 670.5 352.2 671.0C353.6 671.5 355.2 675.2 356.9 678.8C358.5 682.4 359.8 690.0 361.2 690.6C362.6 691.2 363.5 686.4 364.7 682.3C365.9 678.2 366.5 675.1 367.6 668.4C368.7 661.7 369.4 654.7 370.8 645.8C372.2 636.9 373.5 626.9 375.1 619.7C376.7 612.5 377.9 609.9 379.5 606.7C381.1 603.5 382.2 601.5 383.8 602.0C385.4 602.5 386.5 606.2 388.1 609.3C389.7 612.4 391.1 616.5 392.5 618.9C393.9 621.3 394.6 623.1 396.0 622.3C397.4 621.5 398.9 618.5 400.3 614.5C401.7 610.5 402.7 606.0 403.8 600.6C404.9 595.2 405.4 592.4 406.4 585.0C407.4 577.6 408.3 569.5 409.5 560.0C410.7 550.5 411.7 541.8 413.0 533.0C414.3 524.2 415.2 518.0 416.5 512.0C417.8 505.9 418.7 502.9 420.0 500.0C421.3 497.1 422.1 496.1 423.4 496.1C424.7 496.1 425.7 497.1 427.0 500.0C428.3 502.9 429.2 506.5 430.5 512.0C431.8 517.5 432.6 521.9 434.0 530.0C435.4 538.1 436.5 545.9 438.0 556.0C439.5 566.1 440.8 574.9 442.0 585.0C443.2 595.1 443.6 603.0 444.6 611.0C445.6 619.0 446.1 619.8 447.2 628.4C448.3 637.0 449.3 648.8 450.7 658.0C452.1 667.2 453.4 672.4 455.0 678.8C456.6 685.2 457.9 690.7 459.7 692.7C461.5 694.7 462.9 690.7 464.9 689.5C466.9 688.3 468.6 687.2 470.5 686.3C472.4 685.4 473.4 686.3 475.1 684.8C476.8 683.3 478.3 682.4 479.8 678.3C481.3 674.2 482.1 668.8 483.5 662.5C484.9 656.2 486.0 651.4 487.2 643.9C488.4 636.4 488.9 629.1 490.0 621.5C491.1 613.9 491.8 611.0 493.2 602.5C494.6 594.0 496.1 584.6 497.5 575.0C498.9 565.4 499.7 558.2 501.0 550.0C502.3 541.8 503.2 536.2 504.5 530.0C505.8 523.8 506.8 519.9 508.0 516.0C509.2 512.1 510.0 510.7 511.0 509.0C512.0 507.3 512.5 506.9 513.4 506.9C514.3 506.9 515.0 507.1 516.0 509.0C517.0 510.9 517.9 512.8 519.0 517.0C520.1 521.2 520.9 525.8 522.0 532.0C523.1 538.2 523.9 543.1 525.0 551.0C526.1 558.9 527.2 565.6 528.2 575.0C529.2 584.4 529.6 593.0 530.6 602.5C531.6 612.0 532.7 619.1 533.8 627.0C534.9 634.9 535.3 641.1 536.6 645.7C537.9 650.3 539.4 652.6 540.8 652.3C542.2 652.0 542.7 649.5 544.0 643.9C545.3 638.3 546.5 629.1 547.7 621.5C548.9 613.9 549.6 611.0 550.5 602.5C551.4 594.0 551.6 584.3 552.4 575.0C553.2 565.7 554.0 560.6 555.0 552.0C556.0 543.4 556.9 536.2 558.0 528.0C559.1 519.8 559.9 514.0 561.0 507.0C562.1 500.0 562.9 495.0 564.0 490.0C565.1 485.0 565.9 482.1 567.0 479.5C568.1 476.9 568.8 475.8 569.9 475.8C571.0 475.8 571.9 476.6 573.0 479.5C574.1 482.4 574.9 485.9 576.0 491.5C577.1 497.1 577.9 502.6 579.0 510.0C580.1 517.4 580.9 523.6 582.0 532.0C583.1 540.4 584.0 548.1 585.0 556.0C586.0 563.9 586.6 566.5 587.4 575.0C588.2 583.5 588.7 593.0 589.6 602.5C590.5 612.0 591.4 618.4 592.4 627.0C593.4 635.6 594.0 643.5 595.2 649.5C596.4 655.5 597.4 659.7 598.9 659.7C600.4 659.7 602.4 653.8 603.6 649.5C604.8 645.2 604.4 645.0 605.4 636.4C606.4 627.8 608.1 611.9 609.2 602.5C610.3 593.1 610.6 591.9 611.5 585.0C612.4 578.1 613.0 571.8 614.0 565.0C615.0 558.2 615.9 553.3 617.0 548.0C618.1 542.7 618.7 539.2 620.0 536.0C621.3 532.8 622.7 530.3 624.2 530.3C625.7 530.3 626.8 532.8 628.0 536.0C629.2 539.2 629.9 542.5 631.0 548.0C632.1 553.5 633.0 559.2 634.0 566.0C635.0 572.8 635.8 578.3 636.5 585.0C637.2 591.7 637.1 594.8 637.9 602.5C638.7 610.2 639.7 617.7 640.7 627.0C641.7 636.3 642.5 643.8 643.5 653.0C644.5 662.2 645.2 671.2 646.3 677.3C647.4 683.4 648.4 687.3 649.6 686.3C650.8 685.3 651.7 678.6 652.8 671.8C653.9 665.0 654.5 658.6 655.6 649.4C656.7 640.2 657.6 631.7 658.8 621.5C660.0 611.3 661.1 601.6 662.1 593.6C663.1 585.6 663.6 584.5 664.5 578.0C665.4 571.5 666.0 565.0 667.0 558.0C668.0 551.0 668.9 545.5 670.0 540.0C671.1 534.5 671.7 531.3 673.0 528.0C674.3 524.7 675.4 522.2 676.9 522.2C678.4 522.2 679.7 524.7 681.0 528.0C682.3 531.3 682.9 534.7 684.0 540.0C685.1 545.3 685.9 550.6 687.0 557.0C688.1 563.4 688.8 568.3 690.0 575.0C691.2 581.7 692.3 586.8 693.7 593.6C695.1 600.4 695.7 606.5 697.5 612.2C699.3 617.9 701.4 624.9 703.4 624.9C705.4 624.9 706.6 617.9 708.6 612.2C710.6 606.5 712.0 600.4 714.2 593.6C716.4 586.8 718.7 580.0 720.7 575.0C722.7 570.0 723.6 568.5 725.0 566.5C726.4 564.5 727.3 563.9 728.6 564.2C729.9 564.5 730.7 565.5 732.0 568.0C733.3 570.5 734.4 574.7 735.6 578.0C736.8 581.3 737.2 581.6 738.4 586.2C739.6 590.8 740.6 599.1 742.1 603.0C743.6 606.9 745.3 608.0 746.8 607.6C748.3 607.2 749.3 607.0 750.5 601.0C751.7 595.0 752.4 583.2 753.3 575.0C754.2 566.8 754.6 563.3 755.5 556.0C756.4 548.7 757.1 542.0 758.0 535.0C758.9 528.0 759.7 522.6 760.5 518.0C761.3 513.4 761.8 511.9 762.5 510.0C763.2 508.1 763.6 507.2 764.2 507.4C764.8 507.6 765.3 507.8 766.0 511.0C766.7 514.2 767.4 518.2 768.0 525.0C768.6 531.8 769.0 538.8 769.5 548.0C770.0 557.2 770.4 565.0 771.0 575.0C771.6 585.0 772.1 588.9 772.8 602.5C773.5 616.1 774.0 634.6 774.7 649.4C775.4 664.2 775.8 672.3 776.5 683.0C777.2 693.7 777.7 708.0 778.4 708.0C779.1 708.0 779.6 692.4 780.3 683.0C781.0 673.6 781.3 668.2 782.1 656.9C782.9 645.6 784.0 633.1 784.9 621.5C785.8 609.9 786.5 598.7 786.8 593.6L788.0 570.0L788.5 560.0L788.5 402.0L789.5 400.0L789.5 232.0L790.5 230.0L790.5 136.5L1011.5 136.5" fill="none" stroke="#33f033" stroke-width="1" stroke-linejoin="round"/><path d="M305.5 163V170M305.5 290.6V298.8M791.5 136.5V156M790.5 231.8V288.5M789.5 410V474M789.5 523V538" stroke="#965f00" stroke-width="1" fill="none"/><polyline points="91.5,704.0 93.0,719.5 94.6,719.5 96.2,719.5 97.7,719.5 99.2,689.8 100.8,719.5 102.3,709.0 103.9,719.5 105.5,719.5 107.0,719.5 108.5,697.8 110.1,719.5 111.7,719.5 113.2,689.0 114.8,708.0 116.3,719.5 117.8,719.5 119.4,719.5 121.0,719.5 122.5,719.5 124.1,705.0 125.6,719.5 127.2,712.0 128.7,719.5 130.2,719.5 131.8,707.0 133.3,719.5 134.9,713.0 136.4,712.0 138.0,719.5 139.6,719.5 141.1,719.5 142.7,719.5 144.2,693.0 145.8,700.0 147.3,719.5 148.8,711.0 150.4,719.5 151.9,719.5 153.5,683.0 155.1,719.5 156.6,709.0 158.2,719.5 159.7,719.5 161.2,686.0 162.8,669.9 164.4,707.0 165.9,719.5 167.4,719.5 169.0,700.0 170.6,719.5 172.1,719.5 173.7,671.0 175.2,706.0 176.8,719.5 178.3,699.0 179.9,708.0 181.4,719.5 182.9,679.8 184.5,692.0 186.1,719.5 187.6,719.5 189.2,691.0 190.7,719.5 192.2,664.0 194.5,672.0 196.3,713.4 197.6,667.0 199.0,682.0 200.5,670.0 202.0,662.0 203.2,655.2 204.4,673.6 206.3,647.5 208.0,643.0 210.0,640.0 214.0,625.0 219.5,605.6 222.0,602.3 230.0,570.0 237.8,543.8 243.3,520.0 251.5,485.3 257.5,456.0 263.9,427.0 269.0,398.0 274.3,369.2 279.5,335.0 284.8,300.0 287.0,288.8 290.9,252.0 294.2,222.0 297.5,194.5 299.5,176.0 301.4,159.8 303.5,150.0 306.8,144.9 310.5,143.6 315.7,142.9 325.0,141.6 339.5,140.3 360.0,140.2 400.0,139.6 458.0,138.8 500.0,138.9 551.4,139.1 600.0,139.4 644.0,139.8 690.0,139.6 700.0,139.6 735.7,140.9 760.0,141.8 780.4,143.6 785.5,145.4 789.3,150.0 791.5,156.5 793.8,166.3 796.0,181.0 798.2,199.0 801.0,224.0 804.2,252.6 808.0,285.0 810.7,300.0 813.1,318.0 816.5,344.0 820.5,368.5 824.0,384.0 827.4,398.2 833.9,428.0 840.0,458.0 845.8,486.0 852.0,512.0 858.3,538.0 864.0,556.0 871.5,578.8 875.5,598.0 878.0,608.0 879.5,604.0 881.0,618.0 882.5,625.6 884.0,620.0 885.0,633.0 886.5,628.0 888.0,642.0 889.5,634.0 891.0,649.0 893.3,654.0 894.0,650.0 895.0,665.0 896.0,684.0 897.0,668.0 898.8,680.6 900.0,672.0 901.0,690.0 902.6,696.0 904.0,684.0 905.3,671.0 906.5,700.0 908.0,714.7 909.5,719.5 911.8,719.5 913.3,695.3 914.9,719.5 916.4,719.5 918.0,719.5 919.5,712.0 921.1,719.5 922.6,692.0 924.2,679.0 925.8,719.5 927.3,706.0 928.8,704.0 930.4,708.0 931.9,719.5 933.5,671.0 935.0,710.0 936.6,719.5 938.1,693.0 939.7,679.0 941.2,719.5 942.8,708.0 944.3,711.0 945.9,719.5 947.4,706.0 949.0,719.5 950.5,719.5 952.1,694.0 953.6,719.5 955.2,672.9 956.8,719.5 958.3,719.5 959.8,714.7 961.4,719.5 962.9,719.5 964.5,719.5 966.0,719.5 967.6,719.5 969.1,719.5 970.7,714.0 972.2,719.5 973.8,719.5 975.3,707.0 976.9,686.0 978.4,719.5 980.0,705.4 981.5,719.5 983.1,700.0 984.6,719.5 986.2,710.0 987.8,704.0 989.3,698.0 990.8,719.5 992.4,710.0 993.9,707.8 995.5,713.0 997.0,719.5 998.6,719.5 1000.1,719.5 1001.7,719.5 1003.2,719.5 1004.8,707.0 1006.3,719.5 1007.9,707.8 1009.4,719.5 1011.0,719.5" fill="none" stroke="#00a0a0" stroke-width="1" stroke-linejoin="round" /></g></svg><svg class="abs" style="left:0;top:0;pointer-events:none" width="1286" height="806" viewBox="0 0 1286 806"><text transform="translate(0,198.0) scale(1.045,1)" x="529.5 563.3 597.3 634.3 649.3 685.4 696.2 733.3 748.2 770.6 786.9 808.8 846.2 867.8 891.6 914.8 926.6 948.2 972.1" y="0" font-family="Liberation Serif, DejaVu Serif, serif" font-size="48" fill="#bcbcbc" stroke="#bcbcbc" stroke-width="0.5" opacity="0.93">www.wtmicrowave.com</text></svg></body></html>
